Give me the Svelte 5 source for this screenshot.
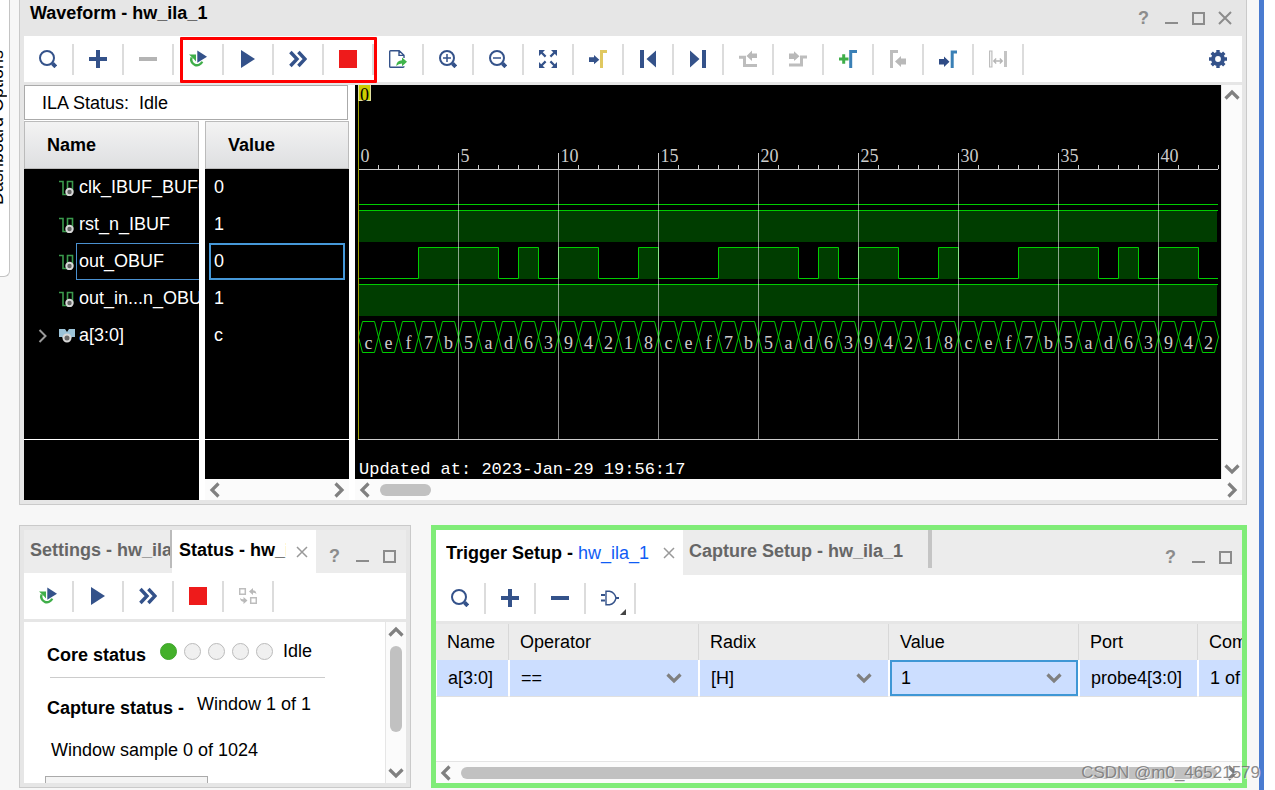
<script>
  const icons = {
    search: '<circle cx="8" cy="8" r="7" fill="none" stroke="#34528a" stroke-width="2"/><path d="M13.4 13.4l3.4 3.4" stroke="#34528a" stroke-width="4"/>',
    plus: '<path d="M0 9h18M9 0v18" stroke="#34528a" stroke-width="4"/>',
    minus: '<path d="M0 9h18" stroke="#34528a" stroke-width="4"/>',
    minusOff: '<path d="M0 9h18" stroke="#b4b4b4" stroke-width="4"/>',
    rerun: '<path d="M2.6 7.4a5.6 5.6 0 1 0 10.6 4.2" fill="none" stroke="#3fae49" stroke-width="2.4"/><path d="M0 4.6h7v7L4.800 9z" fill="#3fae49"/><path d="M8.3 .6v12.2L18 6.8z" fill="#34528a"/>',
    play: '<path d="M2 0v18l14-9z" fill="#34528a"/>',
    forward: '<path d="M1.4 2L8 9l-6.600 7M9.400 2L16 9l-6.600 7" fill="none" stroke="#34528a" stroke-width="3.400"/>',
    stop: '<path d="M0 0h18v18H0z" fill="#ee1b1b"/>',
    exportFile: '<path d="M15 8V5.2L10.2 .7H1.6Q.7 .7.7 1.6v14.8q0 .9.9.9h12.5q.9 0 .9-1M10 1v4.400h5" fill="none" stroke="#34528a" stroke-width="1.400"/><path d="M7.200 16q.4-5.600 5.800-5.800V7.400l5 4.400-5 4.400v-2.800q-3.600 0-5.800 2.600z" fill="#3fb44a"/>',
    zoomIn: '<circle cx="8" cy="8" r="7" fill="none" stroke="#34528a" stroke-width="2"/><path d="M4 8h8M8 4v8" stroke="#34528a" stroke-width="1.500"/><path d="M13.400 13.400l3.400 3.400" stroke="#34528a" stroke-width="4"/>',
    zoomOut: '<circle cx="8" cy="8" r="7" fill="none" stroke="#34528a" stroke-width="2"/><path d="M4 8h8" stroke="#34528a" stroke-width="1.500"/><path d="M13.400 13.400l3.400 3.400" stroke="#34528a" stroke-width="4"/>',
    fit: '<path d="M0 0h6L0 6zM18 0v6l-6-6zM0 18v-6l6 6zM18 18h-6l6-6z" fill="#34528a"/><path d="M2 2l4.600 4.600M16 2l-4.600 4.600M2 16l4.600-4.600M16 16l-4.600-4.600" stroke="#34528a" stroke-width="2.200"/>',
    toCursor: '<path d="M0 7.300h5V5l5.300 4.700L5 14.300V12H0z" fill="#34528a"/><path d="M12.500 18V1.500H18" fill="none" stroke="#e0c860" stroke-width="3"/>',
    first: '<path d="M1 0h4v18H1zM17 .5v17L7.500 9z" fill="#34528a"/>',
    last: '<path d="M13 0h4v18h-4zM1 .5v17L10.500 9z" fill="#34528a"/>',
    prevEdge: '<path d="M0 7.200h5.500v8.300H18" fill="none" stroke="#bdbdbd" stroke-width="3"/><path d="M18 3.500h-5V.6L7.500 6l5.500 5V8h5z" fill="#b9b9b9"/>',
    nextEdge: '<path d="M0 15h12.500V7H18" fill="none" stroke="#bdbdbd" stroke-width="3"/><path d="M0 3.500h5V1.200l5.500 5.100L5 11V9H0z" fill="#b9b9b9"/>',
    addMarker: '<path d="M0 9h9.500M4.700 4.300v9.400" stroke="#3fae49" stroke-width="3"/><path d="M11.700 18V1.400H18" fill="none" stroke="#3a80b6" stroke-width="3"/>',
    prevMarker: '<path d="M2.500 18V1.400H9" fill="none" stroke="#bdbdbd" stroke-width="3"/><path d="M17 8.500h-5V6l-6 5.500 6 5.500v-2.500h5z" fill="#b9b9b9"/>',
    nextMarker: '<path d="M0 9h5V6.500l5.500 5.200L5 17v-2.500H0z" fill="#2f4c86"/><path d="M13.200 18V2H18" fill="none" stroke="#3a80b6" stroke-width="3"/>',
    measure: '<path d="M.6 1h2.300v16H.6z" fill="none" stroke="#bdbdbd" stroke-width="1.200"/><path d="M15 1h3v16h-3z" fill="#c4c4c4"/><path d="M4.500 11h9M7.200 8.500L4.700 11l2.500 2.500M10.800 8.500l2.500 2.500-2.500 2.500" fill="none" stroke="#b4b4b4" stroke-width="1.300"/>',
    gear: '<circle cx="9" cy="9" r="4.900" fill="none" stroke="#34528a" stroke-width="4"/><g stroke="#34528a" stroke-width="3.400"><path d="M9 0v4M9 14v4M0 9h4M14 9h4M2.700 2.700l2.800 2.800M12.500 12.500l2.800 2.800M2.700 15.300l2.800-2.800M12.500 5.500l2.800-2.800"/></g>',
    exchange: '<path d="M.7 1.700h5.600v5.600H.7zM11.700 10.700h5.600v5.600h-5.600z" fill="none" stroke="#bdbdbd" stroke-width="1.500"/><path d="M10 4.500l4-3.500v2.200q3 0 3.500 3.800-1.500-1.500-3.500-1.300V8zM8.500 13.500l-4 3.500v-2.200Q1.500 14.800 1 11q1.500 1.500 3.500 1.300V10z" fill="#b9b9b9"/>',
    gate: '<path d="M5 2.200h3.500q5.200 1 6.500 6.800-1.300 5.800-6.500 6.800H5z" fill="none" stroke="#34528a" stroke-width="1.400"/><path d="M15 9h3M0 6h4M0 11.500h4" stroke="#34528a" stroke-width="1.800"/>'
  };

  const waveTools = [
    ['search', 'Search'],
    ['plus', 'Add'],
    ['minusOff', 'Remove'],
    ['rerun', 'Auto re-trigger'],
    ['play', 'Run trigger'],
    ['forward', 'Run trigger immediate'],
    ['stop', 'Stop trigger'],
    ['exportFile', 'Export ILA data'],
    ['zoomIn', 'Zoom in'],
    ['zoomOut', 'Zoom out'],
    ['fit', 'Zoom fit'],
    ['toCursor', 'Go to cursor'],
    ['first', 'Go to first'],
    ['last', 'Go to last'],
    ['prevEdge', 'Previous transition'],
    ['nextEdge', 'Next transition'],
    ['addMarker', 'Add marker'],
    ['prevMarker', 'Previous marker'],
    ['nextMarker', 'Next marker'],
    ['measure', 'Swap cursors']
  ];
  const statusTools = [
    ['rerun', 'Auto re-trigger'],
    ['play', 'Run trigger'],
    ['forward', 'Run trigger immediate'],
    ['stop', 'Stop trigger'],
    ['exchange', 'Transfer']
  ];
  const triggerTools = [
    ['search', 'Search'],
    ['plus', 'Add probe'],
    ['minus', 'Remove probe'],
    ['gate', 'Trigger condition']
  ];

  const signals = [
    { name: 'clk_IBUF_BUFG', value: '0' },
    { name: 'rst_n_IBUF', value: '1' },
    { name: 'out_OBUF', value: '0' },
    { name: 'out_in...n_OBUF', value: '1' },
    { name: 'a[3:0]', value: 'c', bus: true }
  ];
  let selected = $state('out_OBUF');

  // wave geometry
  const X0 = 3;
  const STEP = 20;
  const COUNT = 43;
  const END = X0 + STEP * COUNT;
  const lfsr = 'cef7b5ad6394218';
  const highs = [[3, 7], [8, 9], [10, 12], [14, 15]];

  const x = (n) => X0 + n * STEP + 0.5;
  const samples = Array.from({ length: COUNT }, (_, n) => n);
  const ticks = Array.from({ length: COUNT + 1 }, (_, n) => n);
  const pulses = [0, 15, 30]
    .flatMap((base) => highs.map(([a, b]) => [a + base, b + base]))
    .filter(([a]) => a < COUNT);
  const outLine =
    `M${x(0)} 193.5` + pulses.map(([a, b]) => `H${x(a)}V162.5H${x(b)}V193.5`).join('') + `H${END}`;
  const cell = (n) => {
    const l = x(n);
    return `M${l} 252l4 -15.5h12l4 15.5l-4 15.5h-12z`;
  };

  let operator = $state('==');
  let radix = $state('[H]');
  let value = $state('1');
</script>

{#snippet tool(name, label)}
  <button class="tool" title={label} aria-label={label}>
    <svg width="18" height="18" viewBox="0 0 18 18">{@html icons[name]}</svg>
    {#if name === 'gate'}<span class="corner"></span>{/if}
  </button>
{/snippet}

{#snippet arrow(dir)}
  <button class="arrow {dir}" aria-label="Scroll {dir}">
    <svg width="16" height="16" viewBox="0 0 16 16">
      <path d="M1.5 11.500l6.500-6.500 6.500 6.500" fill="none" stroke="#808080" stroke-width="3.200" />
    </svg>
  </button>
{/snippet}

{#snippet windowButtons(closable)}
  <div class="window-buttons">
    <button aria-label="Help" class="help">?</button>
    <button aria-label="Minimize">
      <svg width="14" height="14"><path d="M1 12h13" stroke="#8c8c8c" stroke-width="2" /></svg>
    </button>
    <button aria-label="Maximize">
      <svg width="14" height="14"><path d="M2 2h11v11H2z" fill="none" stroke="#8c8c8c" stroke-width="2" /></svg>
    </button>
    {#if closable}
      <button aria-label="Close">
        <svg width="14" height="14"><path d="M1 1l12 12M13 1L1 13" stroke="#8c8c8c" stroke-width="2" /></svg>
      </button>
    {/if}
  </div>
{/snippet}

<div class="app">
  <aside class="rail">
    <button class="rail-tab"><span>Dashboard Options</span></button>
  </aside>

  <main>
    <section class="panel wave-panel">
      <header class="title-bar">
        <h2>Waveform - hw_ila_1</h2>
        {@render windowButtons(true)}
      </header>

      <div class="toolbar">
        {#each waveTools as [name, label]}
          {@render tool(name, label)}
        {/each}
        <button class="settings" aria-label="Settings">
          <svg width="18" height="18" viewBox="0 0 18 18">{@html icons.gear}</svg>
        </button>
        <div class="highlight"></div>
      </div>

      <div class="wave-body">
        <div class="signal-side">
          <div class="ila-status">ILA Status:&nbsp; Idle</div>
          <div class="names">
            <h3>Name</h3>
            <div class="rows">
              {#each signals as s}
                <div class="row">
                  <span class="twisty">
                    {#if s.bus}
                      <svg width="10" height="14"><path d="M1.500 1l6 6-6 6" fill="none" stroke="#9a9a9a" stroke-width="2" /></svg>
                    {/if}
                  </span>
                  <svg class="sig" width="16" height="16">
                    {#if s.bus}
                      <path d="M0 1h6l2 3 2-3h6v8h-3l-2 2H5L3 9H0z" fill="#9cc3d8" />
                      <circle cx="8" cy="10" r="3.500" fill="#666" stroke="#d8d8d8" stroke-width="2" />
                    {:else}
                      <path d="M0 1.500h4v13h4.500v-13h5V12" fill="none" stroke="#3a9a4c" stroke-width="1.600" />
                      <circle cx="10.500" cy="12" r="3.200" fill="#666" stroke="#d8d8d8" stroke-width="2" />
                    {/if}
                  </svg>
                  <button
                    class="name"
                    class:selected={selected === s.name}
                    onclick={() => (selected = s.name)}>{s.name}</button>
                </div>
              {/each}
            </div>
          </div>
          <div class="values">
            <h3>Value</h3>
            <div class="rows">
              {#each signals as s}
                <div class="value" class:selected={selected === s.name}>{s.value}</div>
              {/each}
            </div>
            <div class="hscroll">
              {@render arrow('left')}
              <span class="track"></span>
              {@render arrow('right')}
            </div>
          </div>
        </div>

        <div class="wave-view">
          <svg class="wave" width="100%" height="394">
            <!-- ruler -->
            <path d="M{X0} 84.5H{END}" stroke="#ccc" />
            {#each ticks as n}
              {#if n % 5 === 0 && n > 0}
                <path d="M{x(n)} 68V84" stroke="#ccc" />
              {:else if n > 0}
                <path d="M{x(n)} 80V84" stroke="#ccc" />
              {/if}
              {#if n % 5 === 0}
                <text class="digit" x={x(n) + 2} y="77">{n}</text>
              {/if}
            {/each}

            <!-- scalar signals -->
            <path d="M{X0} 119.5H{END}" stroke="#00cc00" />
            <rect x={X0} y="125" width={END - X0 - 1} height="32" fill="#003d00" />
            <path d="M{X0} 125.5H{END}" stroke="#00cc00" />
            {#each pulses as [a, b]}
              <rect x={x(a)} y="163" width={(b - a) * STEP} height="31" fill="#003d00" />
            {/each}
            <path d={outLine} fill="none" stroke="#00cc00" />
            <rect x={X0} y="199" width={END - X0 - 1} height="32" fill="#003d00" />
            <path d="M{X0} 199.5H{END}" stroke="#00cc00" />

            <!-- bus -->
            {#each samples as n}
              <path d={cell(n)} fill="none" stroke="#00cc00" />
              <text class="digit" text-anchor="middle" x={x(n) + 10} y="264">{lfsr[n % 15]}</text>
            {/each}

            {#each ticks as n}
              {#if n % 5 === 0 && n > 0}
                <path d="M{x(n)} 85V354" stroke="#fff" stroke-opacity=".55" />
              {/if}
            {/each}
            <path d="M{X0} 354.5H{END}" stroke="#ccc" />

            <!-- cursor -->
            <path d="M3.5 16V354" stroke="#a0a000" />
            <rect x="3" y="0" width="13" height="16" fill="#cccc00" />
            <path d="M3.5 0V15.500H15.500V0" fill="none" stroke="#e0e0a0" />
            <text class="digit cursor" x="5" y="16">0</text>
            <text class="updated" x="4" y="389">Updated at: 2023-Jan-29 19:56:17</text>
          </svg>
          <div class="vscroll">
            {@render arrow('up')}
            <span class="track"></span>
            {@render arrow('down')}
          </div>
          <div class="hscroll wide">
            {@render arrow('left')}
            <span class="track"><span class="thumb short"></span></span>
            {@render arrow('right')}
          </div>
        </div>
      </div>
    </section>

    <div class="bottom">
      <section class="panel status-panel">
        <header class="tabs">
          <button class="tab settings-tab"><span>Settings - hw_ila_1</span></button>
          <button class="tab active status-tab">
            <span>Status - hw_ila_1</span>
            <svg width="12" height="12"><path d="M1 1l10 10M11 1L1 11" stroke="#999" stroke-width="1.500" /></svg>
          </button>
          {@render windowButtons(false)}
        </header>
        <div class="toolbar">
          {#each statusTools as [name, label]}
            {@render tool(name, label)}
          {/each}
        </div>
        <div class="status-body">
          <div class="status-content">
            <div class="core">
              <strong>Core status</strong>
              <div class="dots">
                {#each [0, 1, 2, 3, 4] as i}
                  <span class="dot" class:on={i === 0}></span>
                {/each}
              </div>
              <span>Idle</span>
            </div>
            <hr />
            <div class="capture">
              <strong>Capture status -</strong>
              <span>Window 1 of 1</span>
            </div>
            <div class="sample">Window sample 0 of 1024</div>
            <div class="progress"></div>
          </div>
          <div class="vscroll">
            {@render arrow('up')}
            <span class="track"><span class="thumb"></span></span>
            {@render arrow('down')}
          </div>
        </div>
      </section>

      <section class="trigger-panel">
        <header class="tabs">
          <button class="tab active trigger-tab">
            <span>Trigger Setup - <em>hw_ila_1</em></span>
            <svg width="12" height="12"><path d="M1 1l10 10M11 1L1 11" stroke="#999" stroke-width="1.500" /></svg>
          </button>
          <button class="tab capture-tab">Capture Setup - hw_ila_1</button>
          {@render windowButtons(false)}
        </header>
        <div class="toolbar">
          {#each triggerTools as [name, label]}
            {@render tool(name, label)}
          {/each}
        </div>
        <div class="table-wrap">
          <table>
            <thead>
              <tr>
                <th class="c-name">Name</th>
                <th class="c-pick">Operator</th>
                <th class="c-pick">Radix</th>
                <th class="c-pick">Value</th>
                <th class="c-port">Port</th>
                <th class="c-usage">Comparator Usage</th>
              </tr>
            </thead>
            <tbody>
              <tr>
                <td>a[3:0]</td>
                <td class="pick">
                  <select aria-label="Operator" bind:value={operator}>
                    <option>==</option>
                    <option>!=</option>
                  </select>
                  {@render arrow('down')}
                </td>
                <td class="pick">
                  <select aria-label="Radix" bind:value={radix}>
                    <option>[H]</option>
                    <option>[B]</option>
                  </select>
                  {@render arrow('down')}
                </td>
                <td class="pick focused">
                  <select aria-label="Value" bind:value={value}>
                    <option>0</option>
                    <option>1</option>
                  </select>
                  {@render arrow('down')}
                </td>
                <td>probe4[3:0]</td>
                <td>1 of 1</td>
              </tr>
            </tbody>
          </table>
        </div>
        <div class="hscroll">
          {@render arrow('left')}
          <span class="track"><span class="thumb"></span></span>
          {@render arrow('right')}
        </div>
      </section>
    </div>
  </main>

  <div class="edge"></div>
  <div class="watermark">CSDN @m0_46521579</div>
</div>

<style>
  :global(body) {
    background: #f7f7f7;
    overflow: hidden;
  }

  .app {
    display: flex;
    position: relative;
    height: 100vh;
    font: 18px/22px "Liberation Sans", Arial, sans-serif;
    color: #000;
  }

  .app :global(*) {
    box-sizing: border-box;
  }

  button {
    display: flex;
    align-items: center;
    justify-content: center;
    padding: 0;
    border: 0;
    background: none;
    font: inherit;
    color: inherit;
    white-space: nowrap;
    cursor: pointer;
  }

  svg {
    display: block;
    flex: none;
  }

  h2,
  h3 {
    margin: 0;
    font-size: 18px;
    font-weight: bold;
  }

  main {
    flex: 1;
    min-width: 0;
    display: flex;
    flex-direction: column;
    gap: 20px;
    padding-bottom: 2px;
  }

  /* left rail and right edge */
  .rail {
    width: 19px;
    flex: none;
  }

  .rail-tab {
    width: 10px;
    height: 277px;
    align-items: flex-end;
    justify-content: flex-end;
    padding: 0 1px 71px 0;
    border: solid #c4c4c4;
    border-width: 0 1px 1px 0;
    border-radius: 0 0 6px 0;
    background: #fff;
    overflow: hidden;
  }

  .rail-tab span {
    writing-mode: vertical-rl;
    transform: rotate(180deg);
  }

  .edge {
    width: 16px;
    margin-left: 12px;
    flex: none;
    border-left: 5px solid #4a7bd0;
    background: #fff;
  }

  .watermark {
    position: absolute;
    right: 15px;
    bottom: 6px;
    font-size: 17px;
    color: rgba(110, 110, 110, 0.8);
    text-shadow: 1px 1px 0 rgba(255, 255, 255, 0.7);
    pointer-events: none;
  }

  /* panels */
  .panel {
    border: 1px solid #cacaca;
    background: #e6e6e6;
    padding: 4px;
  }

  .wave-panel {
    border-top: 0;
    padding-top: 0;
  }

  .title-bar {
    display: flex;
    justify-content: space-between;
    height: 36px;
  }

  .title-bar h2 {
    padding: 2px 6px;
  }

  .window-buttons {
    display: flex;
    align-items: center;
    margin-left: auto;
    padding-right: 4px;
  }

  .window-buttons button {
    width: 27px;
    height: 18px;
  }

  .window-buttons .help {
    font-weight: bold;
    color: #8c8c8c;
  }

  .toolbar {
    position: relative;
    display: flex;
    align-items: center;
    height: 46px;
    flex: none;
    background: #fff;
  }

  .tool {
    position: relative;
    width: 50px;
    height: 31px;
    border-right: 2px solid #dcdcdc;
  }

  .corner {
    position: absolute;
    right: 8px;
    bottom: -1px;
    border-left: 6px solid transparent;
    border-bottom: 6px solid #444;
  }

  .settings {
    width: 48px;
    height: 31px;
    margin-left: auto;
  }

  .highlight {
    position: absolute;
    left: 156px;
    top: 1px;
    width: 197px;
    height: 46px;
    border: 3px solid #f00;
    border-radius: 1px;
    pointer-events: none;
  }

  /* waveform */
  .wave-body {
    display: grid;
    grid-template-columns: 325px minmax(0, 1fr);
    column-gap: 6px;
    margin-top: 3px;
    background: #fff;
  }

  .signal-side {
    display: grid;
    grid-template-columns: 175px 144px;
    grid-template-rows: 35px 379px;
    gap: 1px 6px;
  }

  .ila-status {
    grid-column: 1 / -1;
    margin-right: 1px;
    padding: 6px 17px;
    border: 1px solid #aaa;
    background: #fff;
  }

  .names,
  .values {
    display: flex;
    flex-direction: column;
    overflow: hidden;
  }

  h3 {
    height: 48px;
    padding: 12px 22px;
    border: 1px solid #bbb;
    background: linear-gradient(#f3f3f3, #dedfe1);
  }

  .rows {
    flex: 1;
    background: #000 linear-gradient(#fff, #fff) 0 270px / 100% 1px no-repeat;
    color: #fff;
  }

  .row {
    display: flex;
    align-items: center;
    height: 37px;
    padding-left: 14px;
  }

  .twisty {
    width: 21px;
    flex: none;
  }

  .name {
    height: 37px;
    margin: 0 -2px 0 1px;
    padding: 0 2px 2px;
    border: 1px solid transparent;
    flex: 1 0 auto;
    justify-content: flex-start;
  }

  .name.selected {
    border-color: #4a90d0;
  }

  .value {
    height: 37px;
    margin: 0 4px;
    padding: 5px 3px;
    border: 2px solid transparent;
  }

  .value.selected {
    border-color: #4698d8;
  }

  .wave-view {
    display: grid;
    grid-template-columns: minmax(0, 1fr) 21px;
    grid-template-rows: 394px 21px;
  }

  .wave {
    background: #000;
  }

  .digit {
    font-family: "Liberation Serif", serif;
    font-size: 18px;
    fill: #ccc;
  }

  .cursor {
    fill: #000;
  }

  .updated {
    font-family: "Liberation Mono", monospace;
    font-size: 17px;
    fill: #fff;
  }

  /* scroll bars */
  .hscroll,
  .vscroll {
    display: flex;
    align-items: center;
    background: #fbfbfb;
  }

  .hscroll {
    height: 21px;
    padding: 0 2px;
  }

  .wide {
    grid-column: 1 / -1;
  }

  .vscroll {
    flex-direction: column;
    width: 21px;
    padding: 2px 0;
    border-left: 1px solid #e6e6e6;
  }

  .track {
    flex: 1;
    padding: 0 7px;
  }

  .vscroll .track {
    padding: 6px 0;
  }

  .thumb {
    display: block;
    height: 12px;
    border-radius: 6px;
    background: #c1c1c1;
  }

  .thumb.short {
    width: 51px;
  }

  .vscroll .thumb {
    width: 12px;
    height: 86px;
  }

  .arrow {
    width: 16px;
    height: 16px;
    flex: none;
  }

  .left svg {
    transform: rotate(-90deg);
  }

  .right svg {
    transform: rotate(90deg);
  }

  .down svg {
    transform: rotate(180deg);
  }

  /* bottom panels */
  .bottom {
    flex: 1;
    display: grid;
    grid-template-columns: 392px minmax(0, 1fr);
    gap: 20px;
    min-height: 0;
  }

  .status-panel,
  .trigger-panel {
    display: flex;
    flex-direction: column;
    min-width: 0;
    min-height: 0;
  }

  .tabs {
    display: flex;
    height: 43px;
    flex: none;
    background: #ececec;
  }

  .tabs .window-buttons {
    padding-top: 8px;
  }

  .tab {
    font-weight: bold;
    color: #666;
    gap: 10px;
    padding: 0 6px;
  }

  .tab span {
    overflow: hidden;
  }

  .tab.active {
    background: #fff;
    color: #000;
  }

  .settings-tab {
    width: 148px;
    height: 38px;
    padding: 2px 0 0 6px;
    border-right: 2px solid #bbb;
    justify-content: flex-start;
  }

  .status-tab {
    width: 144px;
    justify-content: space-between;
    padding: 0 8px 3px 7px;
  }

  .status-tab svg {
    margin-top: 4px;
  }

  .status-tab span {
    width: 107px;
    text-align: left;
  }

  .status-body {
    display: flex;
    flex: 1;
    min-height: 0;
    margin-top: 3px;
    background: #fff;
  }

  .status-content {
    flex: 1;
    padding: 18px 20px 0 23px;
    overflow: hidden;
  }

  .core {
    display: flex;
    gap: 10px;
    height: 37px;
  }

  hr {
    width: 275px;
    margin: 0 0 0 3px;
    border: 0;
    border-top: 1px solid #ccc;
  }

  .core strong,
  .capture strong {
    padding-top: 4px;
  }

  .dots {
    display: flex;
    gap: 7px;
    padding: 3px 0 0 4px;
  }

  .dot {
    width: 17px;
    height: 17px;
    border: 1px solid #bbb;
    border-radius: 50%;
    background: #f0f0f0;
  }

  .dot.on {
    border-color: #3fa52c;
    background: #43b02a;
  }

  .capture {
    display: flex;
    gap: 13px;
    padding: 15px 0 20px;
  }

  .sample {
    padding-left: 4px;
  }

  .progress {
    width: 163px;
    height: 24px;
    margin: 15px 0 0 -2px;
    border: 1px solid #aaa;
    background: #f4f4f4;
  }

  .trigger-panel {
    border: 5px solid #80ec78;
    background: #fff;
  }

  .trigger-panel .tabs {
    height: 45px;
  }

  .trigger-tab {
    width: 247px;
    padding: 0 8px 0 10px;
    justify-content: space-between;
  }

  .trigger-tab em {
    font-style: normal;
    font-weight: normal;
    color: #0f5cf5;
  }

  .capture-tab {
    width: 249px;
    height: 38px;
    padding-top: 4px;
    border-right: 4px solid #c4c4c4;
    justify-content: flex-start;
  }

  .table-wrap {
    flex: 1;
    min-height: 0;
    overflow: hidden;
    border-top: 3px solid #e6e6e6;
    border-bottom: 1px solid #e4e4e4;
  }

  table {
    table-layout: fixed;
    width: 912px;
    border-collapse: separate;
    border-spacing: 0;
  }

  th,
  td {
    height: 36px;
    padding: 0 10px;
    font-weight: normal;
    text-align: left;
    white-space: nowrap;
  }

  th {
    border-right: 1px solid #d8d8d8;
    background: #ececec;
    padding-left: 11px;
  }

  td {
    position: relative;
    height: 37px;
    border: solid #fff;
    border-width: 0 1px 0 1px;
    border-bottom: 1px solid #e0e0e0;
    background: #ccdeff;
    background-clip: padding-box;
    padding-left: 11px;
  }

  .c-name {
    width: 73px;
  }

  .c-pick {
    width: 190px;
  }

  .c-port {
    width: 119px;
  }

  .c-usage {
    width: 150px;
  }

  .pick {
    padding: 0;
  }

  select {
    display: block;
    width: 100%;
    height: 36px;
    padding: 0 28px 0 9px;
    border: 2px solid transparent;
    appearance: none;
    background: none;
    font: inherit;
    color: inherit;
  }

  .focused select {
    border-color: #3f97d5;
    outline: 0;
  }

  .pick .arrow {
    position: absolute;
    right: 16px;
    top: 10px;
    pointer-events: none;
  }
</style>
